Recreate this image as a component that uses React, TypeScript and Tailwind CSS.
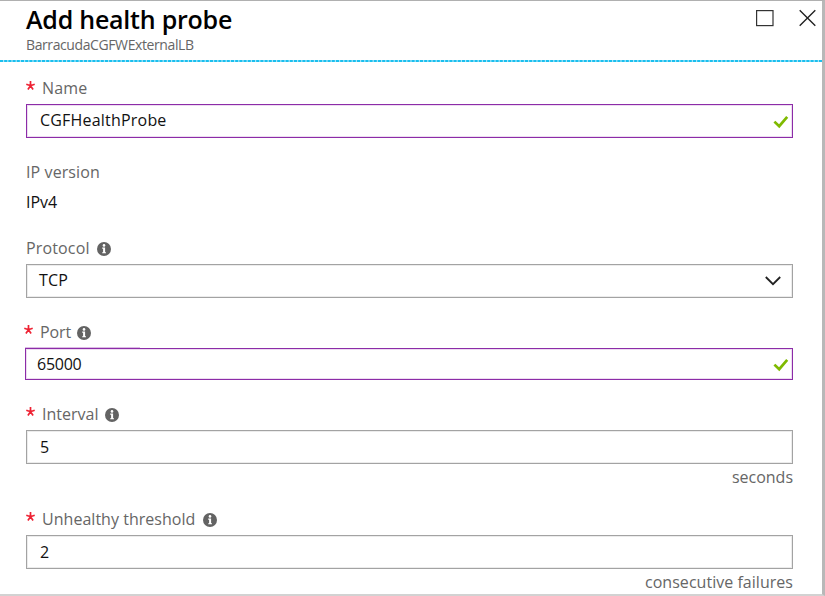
import React from 'react';
import clsx from 'clsx';

interface FieldLabelProps {
  text: string;
  required?: boolean;
  info?: boolean;
  className?: string;
  textClassName?: string;
}

const InfoIcon = () => (
  <svg width="14" height="14" viewBox="0 0 14 14" className="mt-[2px] shrink-0">
    <circle cx="7" cy="7" r="7" fill="#636363" />
    <circle cx="7" cy="3.4" r="1.3" fill="#fff" />
    <path d="M5.2 5.6H8.1V10.2H9V11.3H5.2V10.2H6.1V6.7H5.2Z" fill="#fff" />
  </svg>
);

const CheckIcon = () => (
  <svg width="16" height="14" viewBox="0 0 16 14" fill="none" className="mt-[2px]">
    <path d="M1.4 6.6L6.2 11.2L14.2 1.8" stroke="#7fba00" strokeWidth="2.7" />
  </svg>
);

const FieldLabel: React.FC<FieldLabelProps> = ({ text, required, info, className, textClassName }) => (
  <div className={clsx('flex h-[22px] items-center text-[#666]', className)}>
    {required && (
      <svg width="9" height="9" viewBox="0 0 9 9" fill="none" className="mr-[7px] -mt-[6px] shrink-0">
        <path
          d="M4.5 0V4.7M0.3 3.2L4.5 4.7L8.7 3.2M1.9 8.4L4.5 4.7L7.1 8.4"
          stroke="#ee2233"
          strokeWidth="1.7"
        />
      </svg>
    )}
    <span className={clsx('whitespace-nowrap', textClassName)}>{text}</span>
    {info && <InfoIcon />}
  </div>
);

const valid = 'border-[#8c2ca8] shadow-[inset_0_0_0_1px_#eddcf1]';
const normal = 'border-[#a3a3a3] shadow-[inset_0_0_0_1px_#ececec]';

export default function App() {
  return (
    <div className="flex h-[596px] w-[825px] flex-col overflow-hidden border-t border-r-[3px] border-b-2 border-t-[#b0b0b0] border-r-[#b8b8b8] border-b-[#d2d2d2] bg-white font-['Open_Sans',sans-serif] text-[16px] leading-[22px] text-[#111]">
      <header className="flex h-[59px] shrink-0 justify-between pl-[26px]">
        <div>
          <h1 className="mt-[3px] text-[25px] leading-[30px] font-semibold tracking-[-0.23px] whitespace-nowrap text-black">
            Add health probe
          </h1>
          <p className="mt-[2px] text-[14px] leading-[18px] tracking-[-0.4px] text-[#666]">BarracudaCGFWExternalLB</p>
        </div>
        <div className="mt-[8px] mr-[6px] flex h-[18px] items-center gap-[25px]">
          <svg width="18" height="18" viewBox="0 0 18 18" fill="none">
            <rect x="0.6" y="1.6" width="16.4" height="15" stroke="#333" strokeWidth="1.2" />
          </svg>
          <svg width="17" height="18" viewBox="0 0 17 18" fill="none">
            <path d="M0.7 1.3L16.3 16.7M16.3 1.3L0.7 16.7" stroke="#222" strokeWidth="1.4" />
          </svg>
        </div>
      </header>
      <svg width="822" height="2" className="shrink-0">
        <path d="M0 1H822" stroke="#a8e5f8" strokeWidth="2" />
        <path d="M0 1H822" stroke="#1bbfee" strokeWidth="2" strokeDasharray="3 1.2" />
      </svg>

      <main className="flex flex-col pt-[15px] pr-[29px] pl-[26px]">
        <FieldLabel text="Name" required textClassName="tracking-[0.15px]" />
        <div className={clsx('mt-[5px] flex h-[34px] items-center justify-between border pr-[3px] pl-[13px]', valid)}>
          <span className="mb-[2px] tracking-[0.2px]">CGFHealthProbe</span>
          <CheckIcon />
        </div>

        <FieldLabel text="IP version" className="mt-[23px]" textClassName="tracking-[0.1px]" />
        <div className="mt-2 h-[22px]">IPv4</div>

        <FieldLabel text="Protocol" info className="mt-6" textClassName="mr-[7px] tracking-[0.15px]" />
        <div className={clsx('mt-[5px] flex h-[34px] items-center justify-between border pr-[10px] pl-3', normal)}>
          <span className="mb-[2px] tracking-[0.2px]">TCP</span>
          <svg width="18" height="12" viewBox="0 0 18 12" fill="none">
            <path d="M1.8 2L9 9.2L16.2 2" stroke="#222" strokeWidth="1.8" />
          </svg>
        </div>

        <FieldLabel
          text="Port"
          required
          info
          className="mt-[23px] -ml-[2px]"
          textClassName="mr-[6px] tracking-[-0.1px]"
        />
        <div
          className={clsx('relative mt-[5px] -ml-px flex h-[32px] items-center justify-between border pr-[3px] pl-[11px]', valid)}
        >
          <span className="absolute -top-[2px] -left-px h-px w-[115px] bg-[#dcbce5]" />
          <span className="tracking-[-0.25px]">65000</span>
          <CheckIcon />
        </div>

        <FieldLabel text="Interval" required info className="mt-[23px]" textClassName="mr-[7px]" />
        <div className={clsx('mt-[5px] flex h-[34px] items-center border pl-[13px]', normal)}>5</div>
        <div className="mt-[2px] text-right text-[#666]">seconds</div>

        <FieldLabel text="Unhealthy threshold" required info className="mt-5" textClassName="mr-2 tracking-[0.03px]" />
        <div className={clsx('mt-[5px] flex h-[34px] items-center border pl-[13px]', normal)}>2</div>
        <div className="mt-[2px] text-right tracking-[0.03px] text-[#666]">consecutive failures</div>
      </main>
    </div>
  );
}
